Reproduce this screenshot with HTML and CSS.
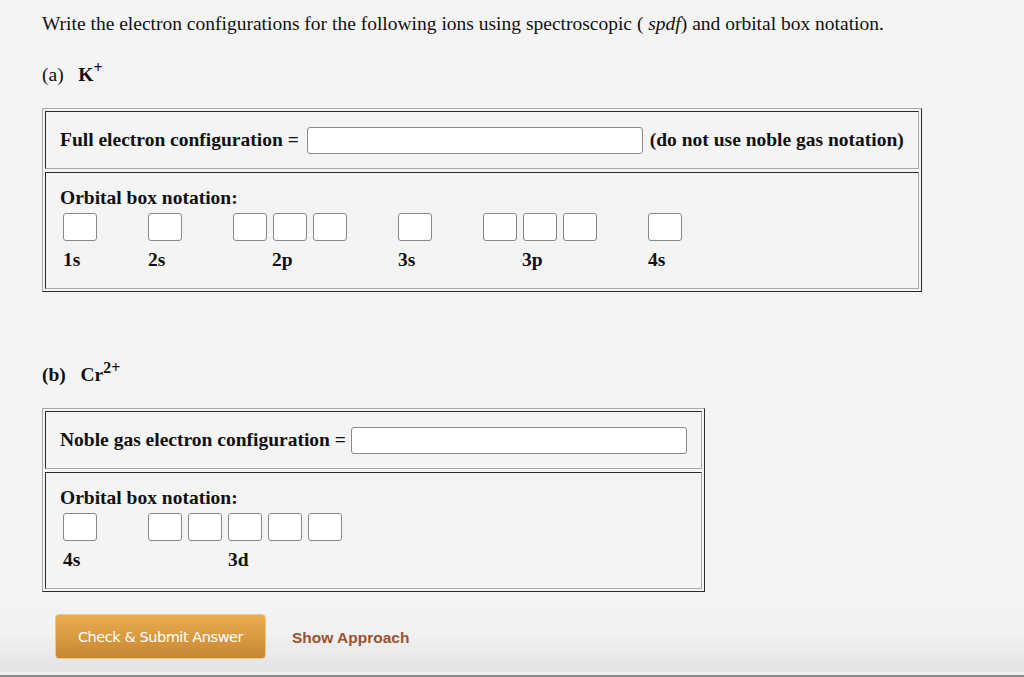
FILE: index.html
```html
<!DOCTYPE html>
<html>
<head>
<meta charset="utf-8">
<link rel="stylesheet" href="styles.css">
</head>
<body>
<div class="content">
  <p class="intro">Write the electron configurations for the following ions using spectroscopic ( <i>spdf</i>) and orbital box notation.</p>

  <p class="part part-a">(a)&nbsp;&nbsp; <b>K<sup>+</sup></b></p>

  <div class="qtable qtable-a">
    <div class="cell cell-row">
      <b>Full electron configuration =</b>
      <input class="ans ans-a" type="text">
      <b>(do not use noble gas notation)</b>
    </div>
    <div class="cell cell-orb">
      <div class="orb-title">Orbital box notation:</div>
      <div class="orbitals">
        <div class="group"><div class="boxes"><input class="box"></div><div class="lbl">1s</div></div>
        <div class="group"><div class="boxes"><input class="box"></div><div class="lbl">2s</div></div>
        <div class="group"><div class="boxes"><input class="box"><input class="box"><input class="box"></div><div class="lbl lbl3">2p</div></div>
        <div class="group"><div class="boxes"><input class="box"></div><div class="lbl">3s</div></div>
        <div class="group"><div class="boxes"><input class="box"><input class="box"><input class="box"></div><div class="lbl lbl3">3p</div></div>
        <div class="group"><div class="boxes"><input class="box"></div><div class="lbl">4s</div></div>
      </div>
    </div>
  </div>

  <p class="part part-b"><b>(b)&nbsp;&nbsp; Cr<sup>2+</sup></b></p>

  <div class="qtable qtable-b">
    <div class="cell cell-row">
      <b>Noble gas electron configuration =</b><input class="ans ans-b" type="text">
    </div>
    <div class="cell cell-orb">
      <div class="orb-title">Orbital box notation:</div>
      <div class="orbitals">
        <div class="group"><div class="boxes"><input class="box"></div><div class="lbl">4s</div></div>
        <div class="group"><div class="boxes"><input class="box"><input class="box"><input class="box"><input class="box"><input class="box"></div><div class="lbl lbl5">3d</div></div>
      </div>
    </div>
  </div>
</div>

<div class="footer">
  <button class="submit" type="button">Check &amp; Submit Answer</button>
  <a class="approach" href="#">Show Approach</a>
</div>
</body>
</html>
```

FILE: styles.css
```css
html, body {
  margin: 0;
  padding: 0;
  height: 100%;
}
body {
  background: #f4f4f4;
  font-family: "Liberation Serif", "Times New Roman", serif;
  font-size: 19.5px;
  color: #111;
  overflow: hidden;
  display: flex;
  flex-direction: column;
}
.content {
  padding: 13px 0 0 42px;
  flex: 1;
  min-height: 0;
}
.intro {
  margin: 0;
  line-height: 22px;
}
.part {
  margin: 0;
  line-height: 22px;
}
.part sup {
  font-size: 16px;
  line-height: 0;
  vertical-align: 8px;
}
.part-a {
  margin-top: 29px;
}
.part-b {
  margin-top: 72px;
}
.qtable {
  border: 1px solid;
  border-color: #a8a8a8 #2a2a2a #2a2a2a #a8a8a8;
  padding: 2px;
  display: flex;
  flex-direction: column;
  gap: 3px;
  box-sizing: border-box;
}
.qtable-a {
  margin-top: 22px;
  width: 880px;
}
.qtable-b {
  margin-top: 22px;
  width: 663px;
}
.cell {
  border: 1px solid;
  border-color: #2a2a2a #a8a8a8 #a8a8a8 #2a2a2a;
}
.cell-row {
  padding: 0 14px;
  display: flex;
  align-items: center;
  font-weight: bold;
  height: 58px;
  box-sizing: border-box;
}
.ans {
  height: 27px;
  box-sizing: border-box;
  border: 1px solid #8a8a8a;
  border-radius: 3px;
  background: #fff;
  margin: 0;
  padding: 0;
  flex: none;
}
.ans-a {
  width: 336px;
  margin-left: 8px;
  margin-right: 7px;
}
.ans-b {
  width: 336px;
  margin-left: 5px;
}
.cell-orb {
  padding: 14px 14px 0 17px;
  height: 117px;
  box-sizing: border-box;
}
.orb-title {
  font-weight: bold;
  line-height: 22px;
  margin-left: -3px;
}
.orbitals {
  display: flex;
  gap: 51px;
  margin-top: 4px;
}
.group {
  display: flex;
  flex-direction: column;
}
.boxes {
  display: flex;
  gap: 6px;
}
.box {
  width: 34px;
  height: 28px;
  box-sizing: border-box;
  border: 1px solid #888;
  border-radius: 3px;
  background: #fff;
  margin: 0;
  padding: 0;
}
.lbl {
  font-weight: bold;
  line-height: 22px;
  margin-top: 8px;
}
.lbl3 {
  padding-left: 39px;
}
.lbl5 {
  padding-left: 80px;
}
.footer {
  flex: none;
  height: 77px;
  box-sizing: border-box;
  background: linear-gradient(to bottom, #f4f4f4 0%, #f2f2f2 40%, #e3e3e3 95%, #f0f0f0 96%, #f0f0f0 100%);
  border-bottom: 2px solid #888;
  display: flex;
  align-items: flex-start;
  padding: 14px 0 0 55px;
}
.submit {
  width: 211px;
  height: 45px;
  border: 1px solid #f0c781;
  border-radius: 4px;
  background: linear-gradient(to bottom, #eaae52 0%, #d99a40 50%, #c58634 100%);
  color: #fff;
  font-family: "DejaVu Sans", Verdana, sans-serif;
  font-size: 14.5px;
  letter-spacing: -0.45px;
  padding: 0;
  margin: 0;
}
.approach {
  margin-left: 26px;
  line-height: 47px;
  font-family: "Liberation Sans", Arial, sans-serif;
  font-weight: bold;
  font-size: 15.5px;
  color: #9b5230;
  text-decoration: none;
}
```
